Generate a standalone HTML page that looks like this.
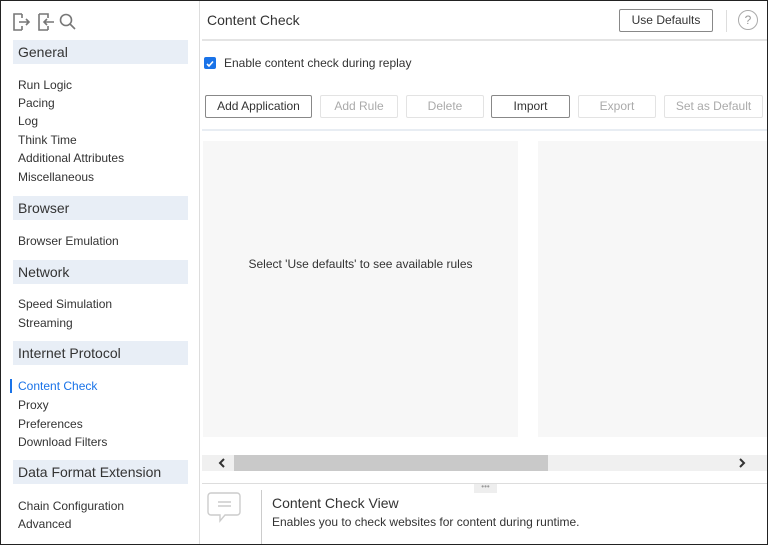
<!DOCTYPE html><html><head><style>
*{margin:0;padding:0;box-sizing:border-box}
body{width:768px;height:545px;overflow:hidden;font-family:"Liberation Sans",sans-serif;color:#333;background:#fff;position:relative}
.a{position:absolute}
.frame{left:0;top:0;width:768px;height:545px;border:1px solid #222;pointer-events:none;z-index:9}
.hd{left:13px;width:175px;height:24px;background:#e8eef6;font-size:14px;line-height:24px;padding-left:5px;color:#333}
.it{left:18px;font-size:12px;line-height:14px;color:#333}
.btn{top:95px;height:23px;border:1px solid #e3e3e3;border-radius:2px;font-size:12px;line-height:21px;text-align:center;color:#aaa;background:#fff}
.btn.on{border-color:#888;color:#333}
</style></head><body>
<div class="a frame"></div>
<div class="a" style="left:199px;top:0;width:1px;height:545px;background:#ddd"></div>
<svg class="a" style="left:12px;top:12px" width="66" height="20" viewBox="0 0 66 20" fill="none" stroke="#777" stroke-width="1.6">
<path d="M10 2H2v16h8M10 2v4M10 18v-4"/><path d="M7 10h10M14 7l3 3-3 3"/>
<path d="M27 2h9v4M36 18h-9V2M36 18v-4"/><path d="M42 10H32M35 7l-3 3 3 3"/>
<circle cx="54" cy="8" r="5.5"/><path d="M58 12l5 5"/>
</svg>
<div class="a hd" style="top:40px">General</div>
<div class="a it" style="top:78px">Run Logic</div>
<div class="a it" style="top:96px">Pacing</div>
<div class="a it" style="top:114px">Log</div>
<div class="a it" style="top:133px">Think Time</div>
<div class="a it" style="top:151px">Additional Attributes</div>
<div class="a it" style="top:170px">Miscellaneous</div>
<div class="a hd" style="top:196px">Browser</div>
<div class="a it" style="top:234px">Browser Emulation</div>
<div class="a hd" style="top:260px">Network</div>
<div class="a it" style="top:297px">Speed Simulation</div>
<div class="a it" style="top:316px">Streaming</div>
<div class="a hd" style="top:341px">Internet Protocol</div>
<div class="a" style="left:10px;top:379px;width:2px;height:14px;background:#1a73e8"></div>
<div class="a it" style="top:379px;color:#1a73e8">Content Check</div>
<div class="a it" style="top:398px">Proxy</div>
<div class="a it" style="top:417px">Preferences</div>
<div class="a it" style="top:435px">Download Filters</div>
<div class="a hd" style="top:460px">Data Format Extension</div>
<div class="a it" style="top:499px">Chain Configuration</div>
<div class="a it" style="top:517px">Advanced</div>

<div class="a" style="left:207px;top:12px;font-size:14px">Content Check</div>
<div class="a btn on" style="left:619px;top:9px;width:94px;height:23px">Use Defaults</div>
<div class="a" style="left:726px;top:10px;width:1px;height:22px;background:#ddd"></div>
<div class="a" style="left:738px;top:10px;width:20px;height:20px;border:1px solid #aaa;border-radius:50%;font-size:12px;color:#999;text-align:center;line-height:18px">?</div>
<div class="a" style="left:202px;top:39px;width:566px;height:2px;background:#e4e4e4"></div>
<div class="a" style="left:204px;top:57px;width:12px;height:12px;background:#1a73e8;border-radius:2px"><svg width="12" height="12"><path d="M3 6l2 2 4-4.5" stroke="#fff" stroke-width="1.6" fill="none"/></svg></div>
<div class="a" style="left:224px;top:56px;font-size:12px">Enable content check during replay</div>
<div class="a btn on" style="left:205px;width:107px">Add Application</div>
<div class="a btn" style="left:320px;width:78px">Add Rule</div>
<div class="a btn" style="left:406px;width:78px">Delete</div>
<div class="a btn on" style="left:491px;width:79px">Import</div>
<div class="a btn" style="left:578px;width:78px">Export</div>
<div class="a btn" style="left:664px;width:99px">Set as Default</div>
<div class="a" style="left:202px;top:129px;width:566px;height:2px;background:#e8edf3"></div>
<div class="a" style="left:203px;top:141px;width:315px;height:296px;background:#f7f7f7"></div>
<div class="a" style="left:538px;top:141px;width:230px;height:296px;background:#f7f7f7"></div>
<div class="a" style="left:203px;top:257px;width:315px;text-align:center;font-size:12px">Select 'Use defaults' to see available rules</div>
<div class="a" style="left:202px;top:455px;width:566px;height:16px;background:#f0f0f0"></div>
<div class="a" style="left:234px;top:455px;width:314px;height:16px;background:#c9c9c9"></div>
<svg class="a" style="left:216px;top:457px" width="12" height="12"><path d="M8 2L4 6l4 4" stroke="#333" stroke-width="2" fill="none"/></svg>
<svg class="a" style="left:736px;top:457px" width="12" height="12"><path d="M4 2l4 4-4 4" stroke="#333" stroke-width="2" fill="none"/></svg>
<div class="a" style="left:202px;top:483px;width:566px;height:1px;background:#ddd"></div>
<div class="a" style="left:474px;top:484px;width:23px;height:9px;background:#eee;font-size:8px;color:#999;text-align:center;line-height:6px">•••</div>
<svg class="a" style="left:207px;top:492px" width="36" height="32" fill="none" stroke="#ccc" stroke-width="1.4"><path d="M4 1h26a3 3 0 0 1 3 3v16a3 3 0 0 1-3 3H18l-5 6v-6H4a3 3 0 0 1-3-3V4a3 3 0 0 1 3-3z"/><path d="M11 10h13M11 14h13"/></svg>
<div class="a" style="left:261px;top:490px;width:1px;height:55px;background:#ccc"></div>
<div class="a" style="left:272px;top:495px;font-size:14px">Content Check View</div>
<div class="a" style="left:272px;top:515px;font-size:12px">Enables you to check websites for content during runtime.</div>
</body></html>
